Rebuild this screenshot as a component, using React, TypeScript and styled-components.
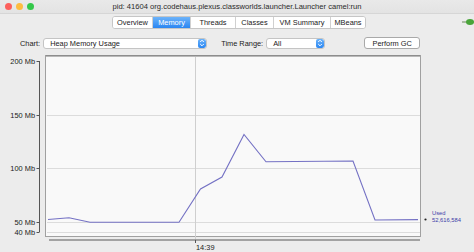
import React from "react";
import styled, { createGlobalStyle } from "styled-components";

const Global = createGlobalStyle`
  html, body { margin: 0; padding: 0; }
  body {
    width: 474px; height: 252px; overflow: hidden;
    background: #ececec;
    font-family: "Liberation Sans", Arial, sans-serif;
    color: #1a1a1a;
  }
`;

const Window = styled.div`
  width: 474px;
  height: 252px;
  display: flex;
  flex-direction: column;
  background: #ececec;
`;

const TitleBar = styled.div`
  height: 13px;
  display: grid;
  grid-template-columns: 1fr auto 1fr;
  align-items: center;
  background: linear-gradient(#e9e9e9, #e3e3e3);
  border-bottom: 1px solid #d6d6d6;
`;

const Lights = styled.div`
  display: flex;
  gap: 4px;
  padding-left: 5px;
`;

const Light = styled.span<{ $c: string }>`
  width: 7px;
  height: 7px;
  border-radius: 50%;
  background: ${(p) => p.$c};
`;

const Title = styled.div`
  font-size: 7.6px;
  color: #2a2a2a;
  white-space: nowrap;
`;

const TabsRow = styled.div`
  height: 14px;
  display: flex;
  justify-content: center;
  align-items: center;
  position: relative;
  margin-top: 1px;
  padding-left: 4px;
`;

const Tabs = styled.div`
  display: flex;
  height: 11px;
  border: 1px solid #c6c6c6;
  border-radius: 3px;
  background: #fff;
  overflow: hidden;
`;

const Tab = styled.div<{ $active?: boolean; $w: number }>`
  width: ${(p) => p.$w}px;
  display: flex;
  align-items: center;
  justify-content: center;
  font-size: 7.4px;
  color: ${(p) => (p.$active ? "#fff" : "#1a1a1a")};
  background: ${(p) => (p.$active ? "linear-gradient(#6cb3fa, #2a86f2)" : "#fff")};
  border-left: 1px solid #d0d0d0;
  &:first-child { border-left: none; }
`;

const StatusIcon = styled.svg`
  position: absolute;
  right: 0;
  top: 3px;
`;

const Controls = styled.div`
  height: 14px;
  margin-top: 7px;
  display: flex;
  align-items: center;
  font-size: 7.4px;
  color: #1a1a1a;
`;

const Label = styled.span<{ $ml: number }>`
  margin-left: ${(p) => p.$ml}px;
  margin-right: 3px;
`;

const Select = styled.div<{ $w: number }>`
  width: ${(p) => p.$w}px;
  height: 11px;
  box-sizing: border-box;
  border: 1px solid #c4c4c4;
  border-radius: 3px;
  background: #fff;
  display: flex;
  align-items: center;
  justify-content: space-between;
  padding-left: 6px;
  overflow: hidden;
`;

const Stepper = styled.div`
  width: 8px;
  height: 9px;
  border-radius: 2px;
  background: linear-gradient(#6cb3fa, #2a86f2);
  display: flex;
  align-items: center;
  justify-content: center;
`;

const Button = styled.div`
  margin-left: 39px;
  width: 56px;
  height: 12px;
  box-sizing: border-box;
  border: 1px solid #a9a9a9;
  border-radius: 3px;
  background: #fff;
  display: flex;
  align-items: center;
  justify-content: center;
`;

const ChartSvg = styled.svg`
  display: block;
  margin-top: 2px;
`;

const pts: [number, number][] = [
  [48, 219.5], [69, 217.8], [90, 222.3], [179, 222.3], [200.5, 189], [222, 177],
  [244, 134.5], [266, 161.8], [353, 161], [375, 220], [418, 219.6],
];

const yLabels: [string, number][] = [
  ["200 Mb", 61], ["150 Mb", 115], ["100 Mb", 168], ["50 Mb", 222], ["40 Mb", 232],
];

const font = "Liberation Sans, Arial, sans-serif";

const StepIcon = () => (
  <svg width="6" height="8" viewBox="0 0 6 8">
    <path d="M1.2 3 L3 1.2 L4.8 3 M1.2 5 L3 6.8 L4.8 5" fill="none" stroke="#fff" strokeWidth="1" />
  </svg>
);

export default function App() {
  const tabs: [string, number][] = [
    ["Overview", 39], ["Memory", 37], ["Threads", 44], ["Classes", 37], ["VM Summary", 56], ["MBeans", 34],
  ];
  return (
    <>
      <Global />
      <Window>
        <TitleBar>
          <Lights>
            <Light $c="#fc605c" />
            <Light $c="#fdbc40" />
            <Light $c="#34c84a" />
          </Lights>
          <Title>pid: 41604 org.codehaus.plexus.classworlds.launcher.Launcher camel:run</Title>
          <div />
        </TitleBar>
        <TabsRow>
          <Tabs>
            {tabs.map(([t, w]) => (
              <Tab key={t} $w={w} $active={t === "Memory"}>{t}</Tab>
            ))}
          </Tabs>
          <StatusIcon width="12" height="8" viewBox="0 0 12 8">
            <line x1="0" y1="4" x2="12" y2="4" stroke="#6a8a5a" strokeWidth="1" />
            <ellipse cx="8" cy="4" rx="4" ry="3" fill="#4aa53a" />
          </StatusIcon>
        </TabsRow>
        <Controls>
          <Label $ml={20}>Chart:</Label>
          <Select $w={164}>
            <span>Heap Memory Usage</span>
            <Stepper><StepIcon /></Stepper>
          </Select>
          <Label $ml={14}>Time Range:</Label>
          <Select $w={59}>
            <span>All</span>
            <Stepper><StepIcon /></Stepper>
          </Select>
          <Button>Perform GC</Button>
        </Controls>
        <ChartSvg width="474" height="200" viewBox="0 52 474 200">
          <rect x="45.5" y="55.5" width="375" height="181" fill="#f9f9f9" stroke="#a0a0a0" />
          <line x1="46" y1="56" x2="420" y2="56" stroke="#7a7a7a" strokeWidth="1" />
          {[115, 168, 222, 232].map((y) => (
            <line key={y} x1="47" y1={y + 0.5} x2="420" y2={y + 0.5} stroke="#dcdcdc" strokeWidth="1" />
          ))}
          <line x1="195.5" y1="57" x2="195.5" y2="240" stroke="#cfcfcf" strokeWidth="1" />
          <line x1="49" y1="240" x2="420" y2="240" stroke="#8a8a8a" strokeWidth="1.5" />
          <line x1="195.5" y1="240" x2="195.5" y2="243" stroke="#555" strokeWidth="1" />
          <text x="196" y="250" fontSize="7.4" fill="#1a1a1a" fontFamily={font}>14:39</text>
          <line x1="39.5" y1="61" x2="39.5" y2="232" stroke="#555" strokeWidth="1" />
          {yLabels.map(([l, y]) => (
            <g key={l}>
              <line x1="36.5" y1={y + 0.5} x2="39.5" y2={y + 0.5} stroke="#555" strokeWidth="1" />
              <text x="35" y={y + 2.6} textAnchor="end" fontSize="7.4" fill="#1a1a1a" fontFamily={font}>{l}</text>
            </g>
          ))}
          <polyline points={pts.map((p) => p.join(",")).join(" ")} fill="none" stroke="#7471c4" strokeWidth="1.1" />
          <circle cx="425.5" cy="219.5" r="1.1" fill="#222" />
          <text x="432" y="215" fontSize="5.8" fill="#3d3da8" fontFamily={font}>Used</text>
          <text x="432" y="222" fontSize="5.8" fill="#3d3da8" fontFamily={font}>52,616,584</text>
        </ChartSvg>
      </Window>
    </>
  );
}
